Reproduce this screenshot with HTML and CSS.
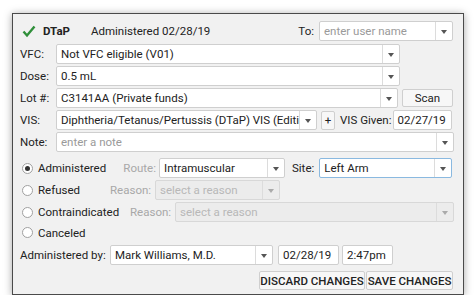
FILE: index.html
```html
<!DOCTYPE html>
<html lang="en">

<head>
    <meta charset="UTF-8">
    <title>DTaP</title>
    <link rel="stylesheet" href="styles.css">
</head>

<body>
    <div class="panel">
        <div class="row header">
            <svg class="check" width="14" height="13" viewBox="0 0 14 13">
                <polyline points="1.5,6.5 5,10.5 12.5,1.5" fill="none" stroke="#2f8f3a" stroke-width="2.4" />
            </svg>
            <span class="vaccine">DTaP</span>
            <span class="status">Administered 02/28/19</span>
            <span class="to">To:</span>
            <div class="select w-to"><span class="value placeholder">enter user name</span><span class="arrow"></span></div>
        </div>

        <div class="row">
            <label class="lbl">VFC:</label>
            <div class="select w-vfc"><span class="value">Not VFC eligible (V01)</span><span class="arrow"></span></div>
        </div>
        <div class="row">
            <label class="lbl">Dose:</label>
            <div class="select w-vfc"><span class="value">0.5 mL</span><span class="arrow"></span></div>
        </div>
        <div class="row">
            <label class="lbl">Lot #:</label>
            <div class="select w-lot"><span class="value">C3141AA (Private funds)</span><span class="arrow"></span></div>
            <button class="btn scan">Scan</button>
        </div>
        <div class="row">
            <label class="lbl">VIS:</label>
            <div class="select w-vis"><span class="value">Diphtheria/Tetanus/Pertussis (DTaP) VIS (Editio</span><span class="arrow"></span></div>
            <button class="btn plus">+</button>
            <span class="vis-given">VIS Given:</span>
            <div class="input w-visdate">02/27/19</div>
        </div>
        <div class="row">
            <label class="lbl">Note:</label>
            <div class="select w-note"><span class="value placeholder">enter a note</span><span class="arrow"></span></div>
        </div>

        <div class="row status-row first">
            <div class="radio-opt w-adm"><span class="radio on"></span>Administered</div>
            <span class="sub-lbl w-sub">Route:</span>
            <div class="select w-route"><span class="value">Intramuscular</span><span class="arrow"></span></div>
            <span class="site">Site:</span>
            <div class="select w-site focus"><span class="value">Left Arm</span><span class="arrow"></span></div>
        </div>
        <div class="row status-row">
            <div class="radio-opt w-adm"><span class="radio"></span>Refused</div>
            <span class="sub-lbl w-sub2">Reason:</span>
            <div class="select w-reason disabled"><span class="value">select a reason</span><span class="arrow"></span></div>
        </div>
        <div class="row status-row">
            <div class="radio-opt w-contra"><span class="radio"></span>Contraindicated</div>
            <span class="sub-lbl w-sub2">Reason:</span>
            <div class="select w-reason2 disabled"><span class="value">select a reason</span><span class="arrow"></span></div>
        </div>
        <div class="row status-row short">
            <div class="radio-opt"><span class="radio"></span>Canceled</div>
        </div>

        <div class="row by-row">
            <label class="lbl by">Administered by:</label>
            <div class="select w-by"><span class="value">Mark Williams, M.D.</span><span class="arrow"></span></div>
            <div class="input w-date">02/28/19</div>
            <div class="input w-time">2:47pm</div>
        </div>

        <div class="actions">
            <button class="btn action w-discard">DISCARD CHANGES</button>
            <button class="btn action w-save">SAVE CHANGES</button>
        </div>
    </div>
</body>

</html>
```

FILE: styles.css
```css
* {
    box-sizing: border-box;
    margin: 0;
    padding: 0;
}

body {
    background: #fff;
    font-family: Roboto, "Liberation Sans", sans-serif;
    font-size: 11.5px;
    color: #222;
}

.panel {
    margin: 13px 0 0 12px;
    width: 452px;
    height: 282px;
    border: 1px solid #4a4a4a;
    background: #f1f1f1;
    box-shadow: 0 1px 8px rgba(0, 0, 0, 0.35);
    padding: 7px 10px 0 7px;
    display: flex;
    flex-direction: column;
    gap: 2px;
}

.row {
    display: flex;
    align-items: center;
    height: 20px;
}

.row > *,
.radio-opt > * {
    flex-shrink: 0;
    white-space: nowrap;
}

.header {
    margin-bottom: 1px;
}

.check {
    margin: 0 7px 0 2px;
}

.vaccine {
    font-weight: bold;
    width: 48px;
}

.row > .status {
    flex: 1;
}

.to {
    margin-right: 5px;
}

.lbl {
    width: 36px;
}

.select,
.input {
    height: 20px;
    display: flex;
    align-items: center;
    background: #fff;
    border: 1px solid #cfcfcf;
    border-radius: 2px;
    overflow: hidden;
    white-space: nowrap;
}

.select .value {
    flex: 1;
    padding-left: 4px;
    overflow: hidden;
}

.input {
    padding-left: 4px;
}

.placeholder {
    color: #9a9a9a;
}

.arrow {
    width: 17px;
    height: 100%;
    border-left: 1px solid #dcdcdc;
    position: relative;
    flex-shrink: 0;
}

.arrow::after {
    content: "";
    position: absolute;
    left: 5px;
    top: 8px;
    border-left: 3.5px solid transparent;
    border-right: 3.5px solid transparent;
    border-top: 4px solid #555;
}

.select.focus {
    border-color: #8ab9e0;
}

.select.disabled {
    background: #ececec;
    border-color: #d8d8d8;
}

.select.disabled .value {
    color: #b8b8b8;
}

.select.disabled .arrow::after {
    border-top-color: #aaa;
}

.w-to { width: 134px; }
.w-vfc { width: 344px; }
.w-lot { width: 342px; }
.w-vis { width: 261px; }
.w-visdate { width: 59px; }
.w-note { width: 398px; }
.w-route { width: 126px; }
.w-site { width: 133px; }
.w-reason { width: 125px; }
.w-reason2 { width: 279px; }
.w-by { width: 163px; }
.w-date { width: 61px; margin-left: 5px; }
.w-time { width: 51px; margin-left: 3px; }

.btn {
    font-family: Roboto, "Liberation Sans", sans-serif;
    font-size: 11.5px;
    color: #222;
    background: #f7f7f7;
    border: 1px solid #cfcfcf;
    border-radius: 2px;
    height: 19px;
    padding: 0;
    white-space: nowrap;
}

.scan {
    width: 51px;
    margin-left: 4px;
    height: 18px;
}

.plus {
    width: 14px;
    margin-left: 4px;
}

.vis-given {
    margin: 0 1px 0 5px;
}

.status-row.first {
    margin-top: 4px;
}

.status-row.short {
    height: 17px;
}

.radio-opt {
    display: flex;
    align-items: center;
}

.w-adm { width: 90px; }
.w-contra { width: 110px; }

.radio {
    width: 11px;
    height: 11px;
    border: 1px solid #a0a0a0;
    border-radius: 50%;
    background: #fff;
    margin: 0 5px 0 2px;
    position: relative;
}

.radio.on::after {
    content: "";
    position: absolute;
    left: 2px;
    top: 2px;
    width: 5px;
    height: 5px;
    border-radius: 50%;
    background: #333;
}

.sub-lbl {
    color: #a8a8a8;
    text-align: right;
    margin-right: 3px;
}

.w-sub { width: 40px; margin-left: 6px; }
.w-sub2 { width: 40px; margin-right: 5px; }

.site {
    margin: 0 5px 0 7px;
}

.by-row {
    margin-top: 2px;
}

.lbl.by {
    width: 90px;
}

.actions {
    display: flex;
    justify-content: flex-end;
    margin-top: 4px;
}

.action {
    height: 19px;
    font-weight: 500;
}

.w-discard { width: 106px; }
.w-save { width: 87px; margin-left: 1px; }
```
